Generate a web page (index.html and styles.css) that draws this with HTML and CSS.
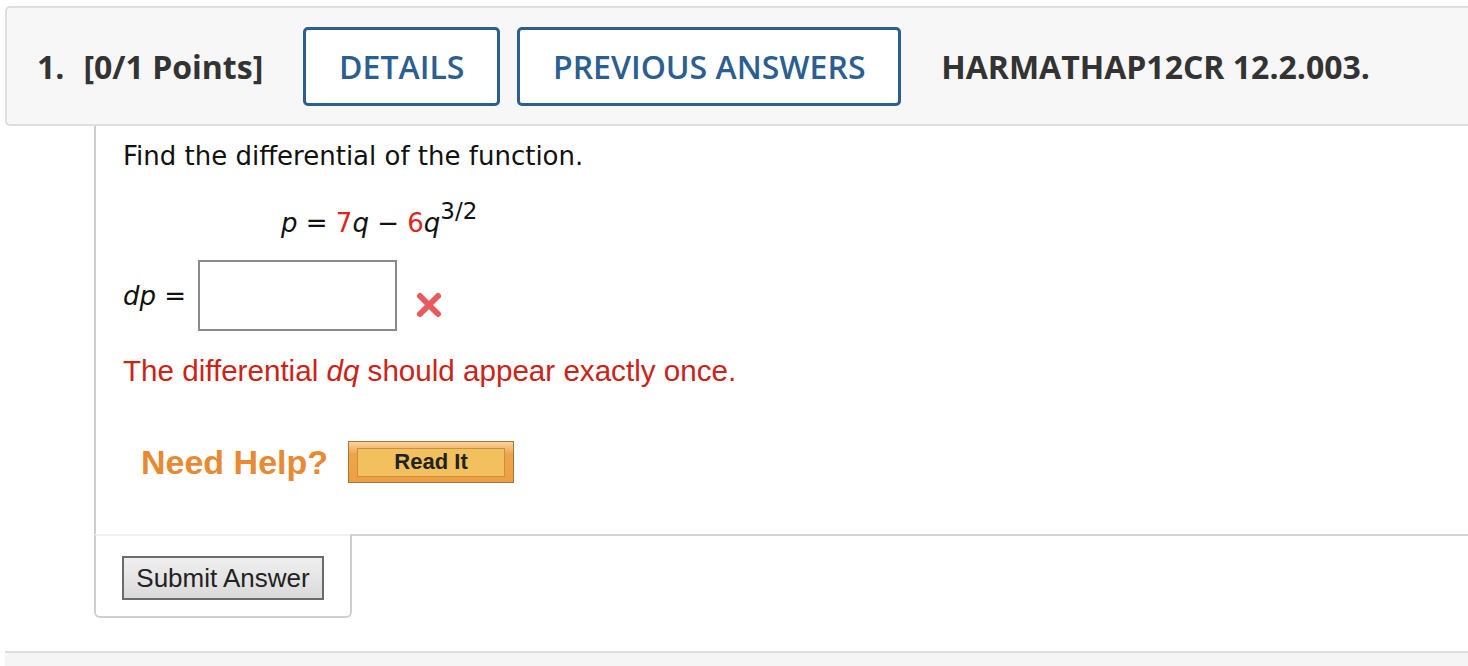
FILE: index.html
```
<!DOCTYPE html>
<html>
<head>
<meta charset="utf-8">
<link rel="stylesheet" href="styles.css">
</head>
<body>
<div class="question">
  <div class="qhead">
    <span class="qnum">1.</span>
    <span class="points">[0/1 Points]</span>
    <button class="hbtn details">DETAILS</button>
    <button class="hbtn prev">PREVIOUS ANSWERS</button>
    <span class="qid">HARMATHAP12CR 12.2.003.</span>
  </div>
  <div class="qbody">
    <p class="prompt">Find the differential of the function.</p>
    <p class="eq"><i>p</i> = <span class="red">7</span><i>q</i> &minus; <span class="red">6</span><i>q</i><sup>3/2</sup></p>
    <div class="ansrow">
      <span class="dp"><i>dp</i> =</span>
      <span class="inbox"></span>
      <svg class="xmark" width="30" height="30" viewBox="0 0 30 30"><path d="M6 6 L24 24 M24 6 L6 24" stroke="#e85a5e" stroke-width="6" stroke-linecap="round"/></svg>
    </div>
    <p class="err">The differential <i>dq</i> should appear exactly once.</p>
    <div class="help">
      <span class="need">Need Help?</span>
      <span class="readit"><span class="readin">Read It</span></span>
    </div>
  </div>
  <div class="foot">
    <div class="submitbox"><button class="submit">Submit Answer</button></div>
    <div class="footline"></div>
  </div>
</div>
<div class="nexthead"></div>
</body>
</html>
```
FILE: styles.css
```
html, body { margin: 0; padding: 0; background: #fff; }
body { width: 1468px; height: 666px; overflow: hidden; position: relative; }
.question { padding: 6px 0 0 5px; }
.qhead {
  height: 120px;
  background: #f7f7f7;
  border: 2px solid #dedede;
  border-right: none;
  border-radius: 5px 0 0 5px;
  display: flex;
  align-items: center;
  font-family: "Open Sans", sans-serif;
  color: #333;
  box-sizing: border-box;
}
.qnum { font-weight: 700; font-size: 32px; margin-left: 30px; }
.points { font-weight: 700; font-size: 32px; margin-left: 19px; }
.hbtn {
  font-family: "Open Sans", sans-serif;
  font-weight: 600;
  font-size: 32px;
  color: #2b5e91;
  background: #fff;
  border: 3px solid #2b5e91;
  border-radius: 5px;
  height: 79px;
  box-sizing: border-box;
  padding: 0;
}
.details { width: 197px; margin-left: 40px; }
.prev { width: 384px; margin-left: 17px; }
.qid { font-weight: 700; font-size: 32px; margin-left: 40px; }
.qbody {
  margin-left: 89px;
  border-left: 2px solid #cfcfcf;
  padding: 14px 0 0 27px;
  height: 408px;
  box-sizing: border-box;
  font-family: "DejaVu Sans", Verdana, sans-serif;
  color: #111;
}
.prompt { margin: 0; font-size: 26px; line-height: 32px; }
.eq { margin: 35px 0 0 158px; font-size: 26px; line-height: 32px; }
.eq sup { font-size: 23px; vertical-align: 13px; line-height: 0; }
.red { color: #e0261c; }
.ansrow { display: flex; align-items: center; margin-top: 21px; }
.dp { font-size: 26px; }
.inbox {
  width: 199px; height: 71px;
  border: 2px solid #8a8a8a;
  box-sizing: border-box;
  margin-left: 12px;
  background: #fff;
}
.xmark { margin-left: 17px; margin-top: 18px; }
.err {
  margin: 24px 0 0 0;
  font-family: "Liberation Sans", Arial, sans-serif;
  font-size: 29.6px;
  color: #cc2318;
  line-height: 32px;
}
.help { display: flex; align-items: center; margin: 54px 0 0 18px; }
.need {
  font-family: "Liberation Sans", Arial, sans-serif;
  font-weight: 700;
  font-size: 34px;
  color: #e88a32;
}
.readit {
  margin-left: 20px;
  width: 166px; height: 42px;
  box-sizing: border-box;
  border: 1px solid #a87535;
  background: linear-gradient(#f8d2a0, #f0a44a 30%, #ee9f45);
  display: flex; align-items: center; justify-content: center;
}
.readin {
  width: 148px; height: 29px;
  box-sizing: border-box;
  border: 1px solid #c98f45;
  background: #f2c05c;
  font-family: "Liberation Sans", Arial, sans-serif;
  font-weight: 700;
  font-size: 22px;
  color: #222;
  display: flex; align-items: center; justify-content: center;
}
.foot { display: flex; margin-left: 89px; }
.submitbox {
  width: 258px; height: 84px;
  box-sizing: border-box;
  border: 2px solid #cfcfcf;
  border-top: 2px solid #f0f0f0;
  border-radius: 0 0 6px 6px;
  padding: 20px 0 0 26px;
}
.submit {
  font-family: "Liberation Sans", Arial, sans-serif;
  font-size: 26px;
  color: #222;
  width: 202px; height: 44px;
  border: 2px solid #6b6b6b;
  background: linear-gradient(#efefef, #dadada);
  padding: 0;
}
.footline { flex: 1; border-top: 2px solid #d3d3d3; margin-left: -2px; }
.nexthead {
  margin: 33px 0 0 5px;
  height: 20px;
  background: #f5f5f5;
  border-top: 2px solid #dedede;
}
```
